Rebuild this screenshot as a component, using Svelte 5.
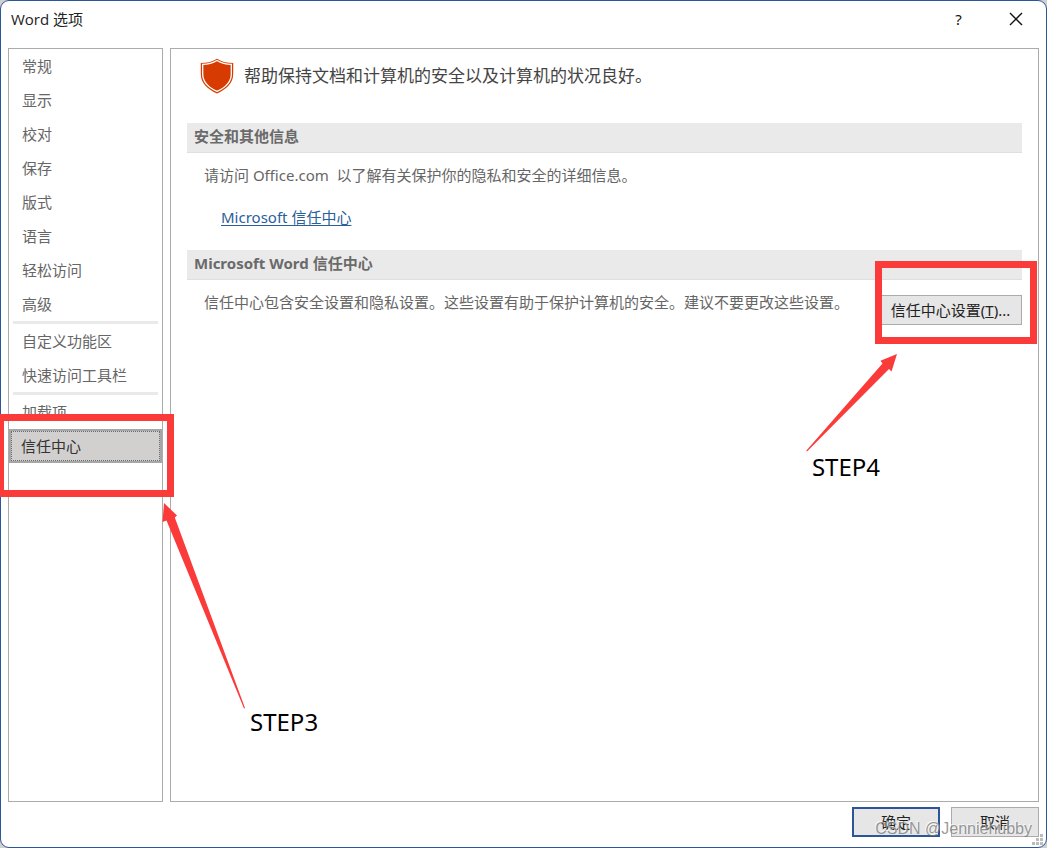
<script>
  const groups = [
    ['常规', '显示', '校对', '保存', '版式', '语言', '轻松访问', '高级'],
    ['自定义功能区', '快速访问工具栏'],
    ['加载项', '信任中心']
  ];
  let selected = $state('信任中心');
  const gripDots = [[8, 0], [4, 4], [8, 4], [0, 8], [4, 8], [8, 8]];
</script>

<div class="dialog">
  <header class="titlebar">
    <h1>Word 选项</h1>
    <button class="caption" aria-label="帮助">?</button>
    <button class="caption" aria-label="关闭">
      <svg width="14" height="14" viewBox="0 0 14 14" aria-hidden="true">
        <path d="M1 1L13 13M13 1L1 13" fill="none" stroke="#111" stroke-width="1.4" />
      </svg>
    </button>
  </header>

  <div class="body">
    <nav class="sidebar">
      {#each groups as group}
        <div class="group">
          {#each group as item}
            <button class="item" class:selected={item === selected} onclick={() => (selected = item)}>{item}</button>
          {/each}
        </div>
      {/each}
    </nav>

    <main class="panel">
      <div class="intro">
        <svg width="34" height="36" viewBox="0 0 34 36" aria-hidden="true">
          <path d="M17 .7C12 4 6.500 5 .8 5V16C.8 25.500 8 31.500 17 35.500C26 31.500 33.200 25.500 33.200 16V5C27.500 5 22 4 17 .7Z" fill="#d83b01" />
          <path d="M17 2.500C12.500 5.200 7 6.300 2.700 6.400V16C2.700 24.200 9 29.800 17 33.400C25 29.800 31.300 24.200 31.300 16V6.400C27 6.300 21.500 5.200 17 2.500Z" fill="none" stroke="#fff" stroke-width="1.300" />
        </svg>
        <p>帮助保持文档和计算机的安全以及计算机的状况良好。</p>
      </div>

      <section>
        <h2>安全和其他信息</h2>
        <p class="text">请访问 Office.com&nbsp; 以了解有关保护你的隐私和安全的详细信息。</p>
        <a class="link" href="#trust">Microsoft 信任中心</a>
      </section>

      <section>
        <h2>Microsoft Word 信任中心</h2>
        <div class="row">
          <p class="text">信任中心包含安全设置和隐私设置。这些设置有助于保护计算机的安全。建议不要更改这些设置。</p>
          <button class="push settings">信任中心设置(<u>T</u>)...</button>
        </div>
      </section>
    </main>
  </div>

  <footer class="footer">
    <button class="push primary">确定</button>
    <button class="push">取消</button>
  </footer>

  <svg class="grip" width="11" height="11" viewBox="0 0 11 11" aria-hidden="true">
    {#each gripDots as [x, y]}
      <rect {x} {y} width="3" height="3" fill="#bcbcbc" />
    {/each}
  </svg>

  <div class="frame frame-nav"></div>
  <svg class="arrow arrow-nav" width="86" height="208" viewBox="0 0 86 208" aria-hidden="true">
    <path d="M4 2L17 14.500L14.800 16.500L85 207L84 207.500L6.500 19.500L2.500 21Z" fill="#fb3a3a" />
  </svg>
  <span class="step step-nav">STEP3</span>

  <div class="frame frame-button"></div>
  <svg class="arrow arrow-button" width="92" height="100" viewBox="0 0 92 100" aria-hidden="true">
    <path d="M91 1L85.500 18.500L83 16L1 98.500L.2 97.700L76.500 10.500L74.500 7.800Z" fill="#fb3a3a" />
  </svg>
  <span class="step step-button">STEP4</span>

  <span class="watermark">CSDN @Jenniehubby</span>
</div>

<style>
  :global(body) {
    margin: 0;
    background: #d0d0d0;
  }

  .dialog {
    position: relative;
    box-sizing: border-box;
    display: flex;
    flex-direction: column;
    min-height: 100vh;
    padding: 0 7px 10px;
    border: 1px solid #2b579a;
    border-radius: 9px;
    background: #fff;
    color: #666;
    font: 15px/20px "Noto Sans", "Noto Sans CJK SC", sans-serif;
  }

  h1, h2, p {
    margin: 0;
    font-size: inherit;
    font-weight: 400;
  }

  button {
    font: inherit;
    color: #222;
    padding: 0;
    margin: 0;
    border: 0;
    background: none;
  }

  .titlebar {
    display: flex;
    align-items: center;
    height: 36px;
    margin-bottom: 11px;
    padding-left: 3px;
  }

  h1 {
    flex: 1;
    font-family: "Open Sans", "Noto Sans CJK SC", sans-serif;
    color: #222;
  }

  .caption {
    display: flex;
    align-items: center;
    justify-content: center;
    width: 57px;
    height: 36px;
    color: #111;
  }

  .caption:last-child {
    margin-right: -5px;
  }

  .body {
    flex: 1;
    display: grid;
    grid-template-columns: 155px minmax(0, 1fr);
    gap: 7px;
  }

  .sidebar,
  .panel {
    border: 1px solid #ababab;
  }

  .panel {
    padding: 0 16px;
  }

  .group + .group::before {
    content: "";
    display: block;
    height: 3px;
    margin: 0 4px;
    background: #e9e9e9;
  }

  .item {
    display: block;
    box-sizing: border-box;
    width: 100%;
    height: 34px;
    padding: 0 13px;
    text-align: left;
    color: #666;
  }

  .item.selected {
    padding: 0 10px;
    border: 2px solid #a6a6a6;
    outline: 1px dotted #6b6b6b;
    outline-offset: -3px;
    background: #d2d0ce;
    color: #333;
  }

  .intro {
    display: flex;
    align-items: center;
    gap: 10px;
    height: 54px;
    margin-bottom: 20px;
    padding-left: 13px;
    font-size: 17px;
    color: #444;
  }

  h2 {
    box-sizing: border-box;
    height: 30px;
    padding: 3px 7px;
    border-bottom: 1px solid #dfdfdf;
    background: #eaeaea;
    font-weight: 700;
    color: #6a6a6a;
  }

  .text {
    padding: 12px 0 0 17px;
  }

  .link {
    display: inline-block;
    margin: 22px 0 23px 34px;
    color: #2a6099;
    text-underline-offset: 2px;
  }

  .row {
    display: flex;
    justify-content: space-between;
  }

  .push {
    box-sizing: border-box;
    width: 88px;
    height: 30px;
    border: 1px solid #ababab;
    background: #e6e6e6;
  }

  .push.settings {
    flex: none;
    width: 143px;
    margin-top: 15px;
  }

  .push.primary {
    border: 2px solid #2b579a;
  }

  .footer {
    display: flex;
    justify-content: flex-end;
    gap: 11px;
    margin-top: 5px;
  }

  .grip {
    position: absolute;
    right: 3px;
    bottom: 2px;
  }

  .frame {
    position: absolute;
    box-sizing: border-box;
    height: 83px;
    border: 7px solid #fb3a3a;
  }

  .frame-nav {
    left: -4px;
    top: 413px;
    width: 177px;
  }

  .frame-button {
    right: 9px;
    top: 260px;
    width: 162px;
  }

  .arrow {
    position: absolute;
  }

  .arrow-nav {
    left: 159px;
    top: 500px;
  }

  .arrow-button {
    right: 148px;
    top: 352px;
  }

  .step {
    position: absolute;
    font-size: 24px;
    line-height: 32px;
    color: #000;
  }

  .step-nav {
    left: 249px;
    top: 705px;
  }

  .step-button {
    right: 166px;
    top: 450px;
  }

  .watermark {
    position: absolute;
    right: 14px;
    bottom: 8px;
    font-family: "Liberation Sans", Arial, sans-serif;
    font-size: 16px;
    color: rgba(120, 120, 120, 0.75);
    text-shadow: -1px -1px 0 rgba(255, 255, 255, 0.7);
    pointer-events: none;
  }
</style>
